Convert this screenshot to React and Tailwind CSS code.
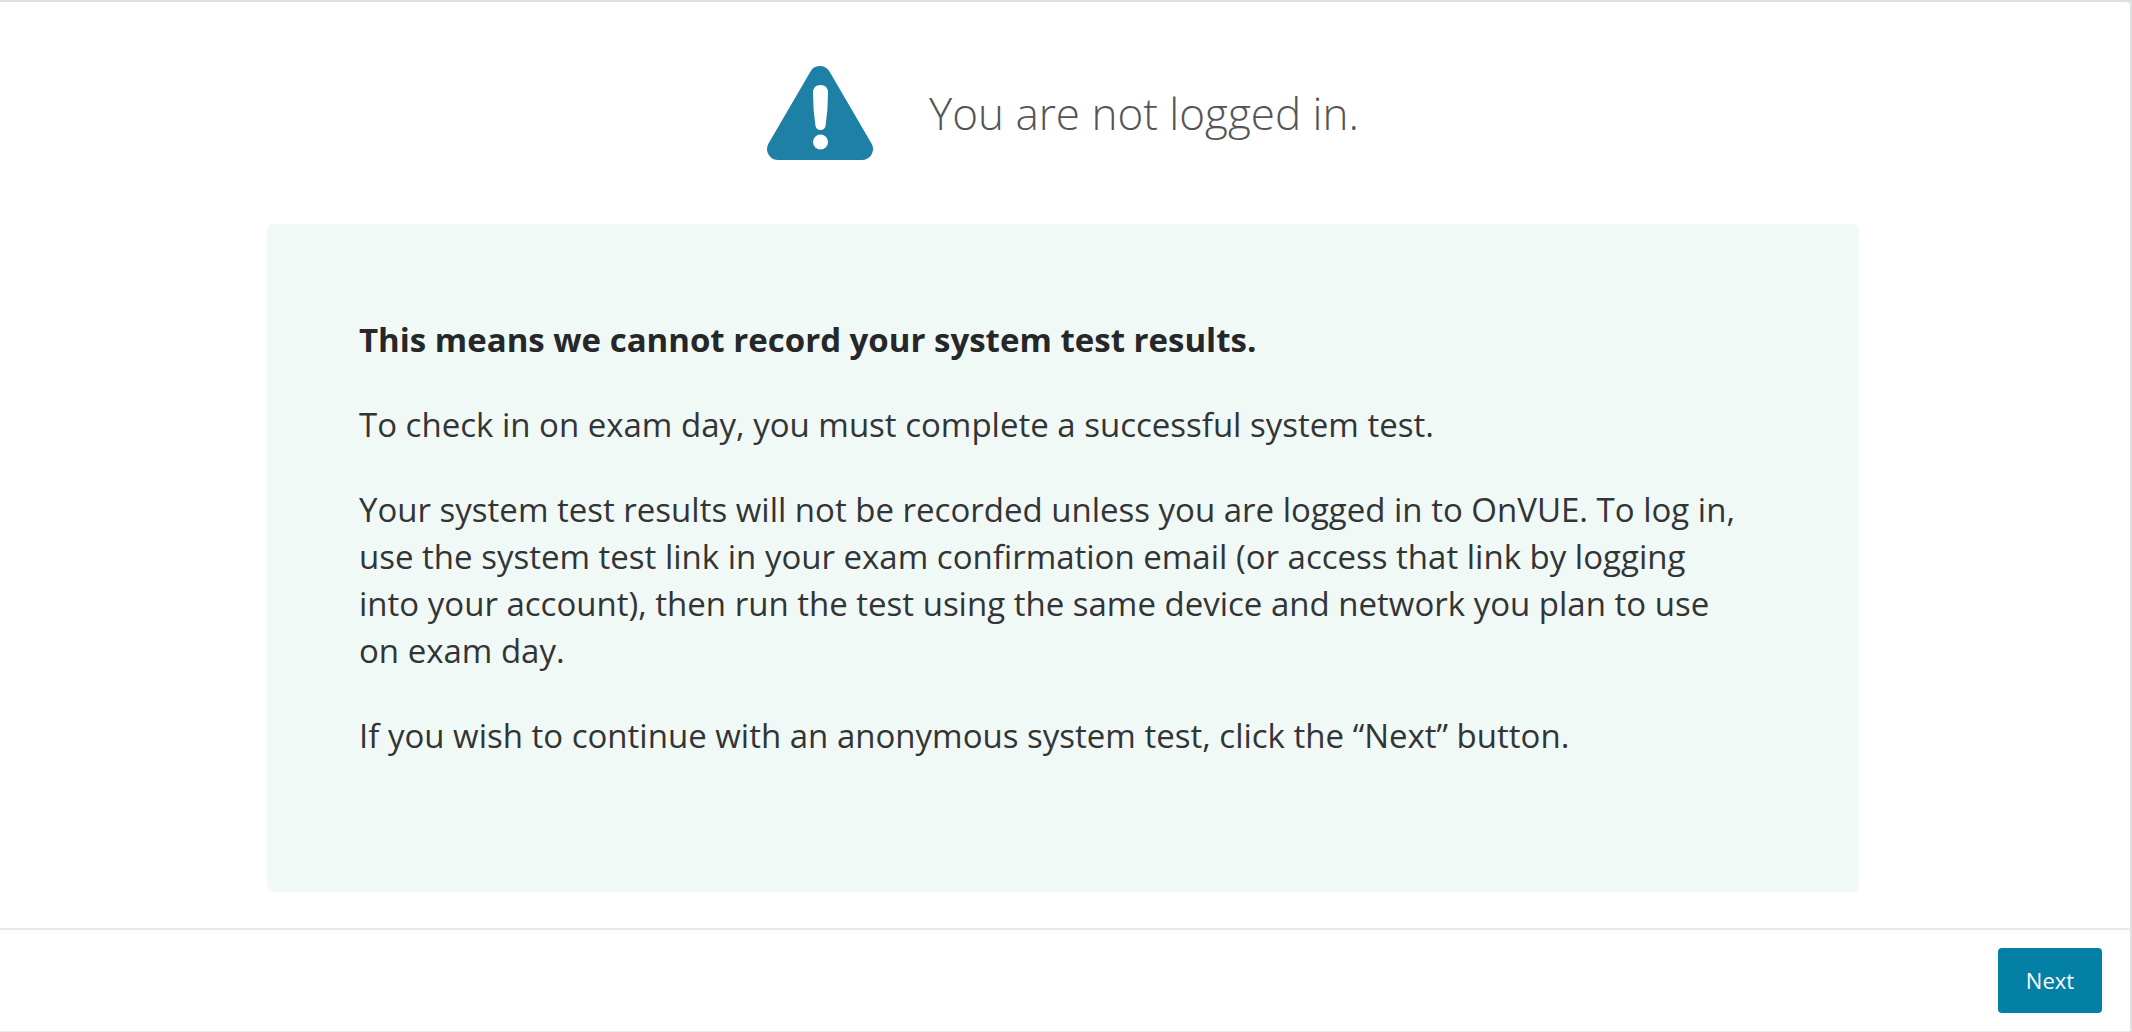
import React from 'react';

const WarningIcon = () => (
  <svg viewBox="0 0 106 94" className="w-[106px] h-[94px] shrink-0" aria-hidden="true">
    <path
      d="M53 11 L95 83 H11 Z"
      fill="#1f80a6"
      stroke="#1f80a6"
      strokeWidth="22"
      strokeLinejoin="round"
    />
    <path d="M46 27 Q46 19 53.5 19 Q61 19 61 27 Q61 44 58.5 60 Q57.5 64 53.5 64 Q49.5 64 48.5 60 Q46 44 46 27 Z" fill="#fff" />
    <circle cx="53.5" cy="76" r="7.5" fill="#fff" />
  </svg>
);

const App = () => {
  return (
    <div
      className="min-h-screen flex flex-col bg-[#e0e1e1] pt-[2px] pr-[2px] text-[#333436]"
      style={{ fontFamily: '"Open Sans", sans-serif' }}
    >
      <div className="flex-1 flex flex-col rounded-tr-sm bg-white">
        {/* Page content */}
        <main className="flex-1 flex flex-col items-center pl-6 pr-7 pt-16 pb-9">
          <div className="flex items-center justify-center gap-14">
            <WarningIcon />
            <h1 className="text-[44px] leading-[64px] font-light text-[#555]">You are not logged in.</h1>
          </div>

          <section className="mt-16 w-full max-w-[1592px] flex-1 rounded-md bg-[#f1f9f7] pl-23 pr-28 py-[92px] text-[33px] leading-[47px]">
            <p className="font-bold text-[#262728]">This means we cannot record your system test results.</p>
            <p className="mt-[38px]">To check in on exam day, you must complete a successful system test.</p>
            <p className="mt-[38px]">
              Your system test results will not be recorded unless you are logged in to OnVUE. To log in, use the
              system test link in your exam confirmation email (or access that link by logging into your account),
              then run the test using the same device and network you plan to use on exam day.
            </p>
            <p className="mt-[38px]">
              If you wish to continue with an anonymous system test, click the “Next” button.
            </p>
          </section>
        </main>

        {/* Footer */}
        <footer className="flex justify-end border-t-2 border-b border-[#e8e9e9] px-7 py-[18px]">
          <button type="button" className="h-[65px] w-26 rounded-sm bg-[#047fa5] text-[22px] text-white">
            Next
          </button>
        </footer>
      </div>
    </div>
  );
};

export default App;
